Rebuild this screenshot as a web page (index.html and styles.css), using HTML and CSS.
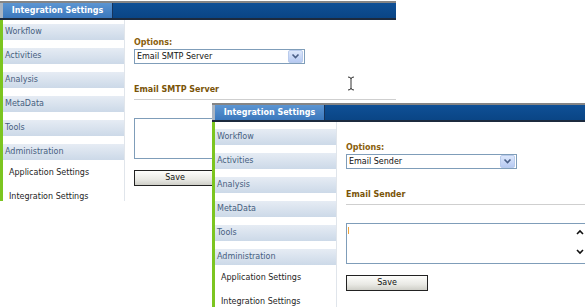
FILE: index.html
```html
<!DOCTYPE html>
<html lang="en">

<head>
	<meta charset="UTF-8">
	<title>Integration Settings</title>
	<link rel="stylesheet" href="styles.css">
</head>

<body>
	<div class="desk">
		<div class="window win-back">
			<div class="topbar">
				<div class="tab">Integration Settings</div>
			</div>
			<div class="frame">
				<ul class="sidebar">
					<li class="nav">Workflow</li>
					<li class="nav">Activities</li>
					<li class="nav">Analysis</li>
					<li class="nav">MetaData</li>
					<li class="nav">Tools</li>
					<li class="nav">Administration</li>
					<li class="sub">Application Settings</li>
					<li class="sub">Integration Settings</li>
				</ul>
				<div class="content">
					<label class="label">Options:</label>
					<div class="select">
						<span class="select-text">Email SMTP Server</span>
						<span class="drop"><svg width="9" height="7" viewBox="0 0 9 7"><path d="M1.5 1.5 L4.5 4.5 L7.5 1.5" fill="none" stroke="#4a5f86" stroke-width="1.6"/></svg></span>
					</div>
					<h3 class="heading">Email SMTP Server</h3>
					<div class="textbox"></div>
					<div class="btn">Save</div>
				</div>
			</div>
		</div>

		<svg class="ibeam" width="8" height="15" viewBox="0 0 8 15">
			<path d="M1 1 Q4 1 4 3 Q4 1 7 1 M4 3 V12 M1 14 Q4 14 4 12 Q4 14 7 14" fill="none" stroke="#333" stroke-width="1"/>
		</svg>

		<div class="window win-front">
			<div class="topbar">
				<div class="tab">Integration Settings</div>
			</div>
			<div class="frame">
				<ul class="sidebar">
					<li class="nav">Workflow</li>
					<li class="nav">Activities</li>
					<li class="nav">Analysis</li>
					<li class="nav">MetaData</li>
					<li class="nav">Tools</li>
					<li class="nav">Administration</li>
					<li class="sub">Application Settings</li>
					<li class="sub">Integration Settings</li>
				</ul>
				<div class="content">
					<label class="label">Options:</label>
					<div class="select">
						<span class="select-text">Email Sender</span>
						<span class="drop"><svg width="9" height="7" viewBox="0 0 9 7"><path d="M1.5 1.5 L4.5 4.5 L7.5 1.5" fill="none" stroke="#4a5f86" stroke-width="1.6"/></svg></span>
					</div>
					<h3 class="heading">Email Sender</h3>
					<div class="textbox">
						<span class="caret"></span>
						<svg class="scroll" width="10" height="32" viewBox="0 0 10 32">
							<path d="M2 10 L5 7 L8 10 M2 26 L5 29 L8 26" fill="none" stroke="#111" stroke-width="1.6"/>
						</svg>
					</div>
					<div class="btn">Save</div>
				</div>
			</div>
		</div>
	</div>
</body>

</html>
```

FILE: styles.css
```css
	body {
		margin: 0;
		background-color: #fff;
		font-family: "DejaVu Sans", Verdana, sans-serif;
		font-size: 8px;
		overflow: hidden;
	}

	.desk {
		position: relative;
		width: 585px;
		height: 307px;
		overflow: hidden;
	}

	.window {
		position: absolute;
		background-color: #fff;
		overflow: hidden;
	}

	.win-back {
		left: 0;
		top: 1px;
		width: 396px;
		height: 200px;
	}

	.win-front {
		left: 212px;
		top: 103px;
		width: 400px;
		height: 210px;
	}

	.topbar {
		display: flex;
		height: 15px;
		border-top: 2px solid #858585;
		border-bottom: 2px solid #1c2a3e;
		background: linear-gradient(#0f5096, #0a4585);
		padding-left: 3px;
		box-shadow: inset 3px 0 0 #a9b4c2;
	}

	.tab {
		width: 109px;
		background: linear-gradient(#5c95d2, #3b78bd);
		border-right: 1px solid #17345c;
		color: #fff;
		font-weight: bold;
		line-height: 15px;
		text-align: center;
	}

	.frame {
		display: flex;
		height: 100%;
		border-left: 3px solid #7cc520;
	}

	.sidebar {
		width: 121px;
		margin: 0;
		padding: 4px 0 0 0;
		list-style: none;
		border-right: 1px solid #e0e5eb;
	}

	.win-front .sidebar {
		padding-top: 7px;
	}

	.nav {
		height: 16px;
		line-height: 16px;
		margin-bottom: 8px;
		padding-left: 2px;
		color: #46607f;
		background: linear-gradient(#e6ecf4, #ccd9e8);
	}

	.sub {
		height: 24px;
		line-height: 10px;
		padding-left: 6px;
		color: #1e1e1e;
	}

	.content {
		flex: 1;
		padding: 18px 0 0 9px;
	}

	.win-front .content {
		padding-top: 21px;
	}

	.label {
		display: block;
		line-height: 10px;
		font-weight: bold;
		color: #8a600c;
	}

	.select {
		display: flex;
		align-items: center;
		width: 169px;
		height: 13px;
		margin-top: 1px;
		border: 1px solid #7f9db9;
		background-color: #fff;
		color: #111;
	}

	.select-text {
		flex: 1;
		padding-left: 2px;
	}

	.drop {
		display: flex;
		align-items: center;
		justify-content: center;
		width: 13px;
		height: 11px;
		margin-right: 1px;
		border: 1px solid #b9cbec;
		border-radius: 2px;
		background: linear-gradient(#dce7fb, #b7caf2);
	}

	.heading {
		margin: 21px 0 0 0;
		padding-bottom: 4px;
		line-height: 10px;
		font-size: 8px;
		color: #7a5408;
		border-bottom: 1px solid #cfcfcf;
	}

	.textbox {
		display: flex;
		justify-content: space-between;
		align-items: flex-start;
		width: 248px;
		height: 39px;
		margin-top: 18px;
		border: 1px solid #7f9db9;
	}

	.caret {
		width: 1px;
		height: 7px;
		margin: 3px 0 0 1px;
		background-color: #f0a43c;
	}

	.scroll {
		margin: 0 10px 0 0;
	}

	.btn {
		width: 80px;
		height: 14px;
		margin-top: 11px;
		border: 1px solid #222;
		background: linear-gradient(#fdfdfb, #e9e9e4 60%, #cfcfc8);
		line-height: 14px;
		text-align: center;
		color: #111;
	}

	.ibeam {
		position: absolute;
		left: 347px;
		top: 76px;
	}
```
